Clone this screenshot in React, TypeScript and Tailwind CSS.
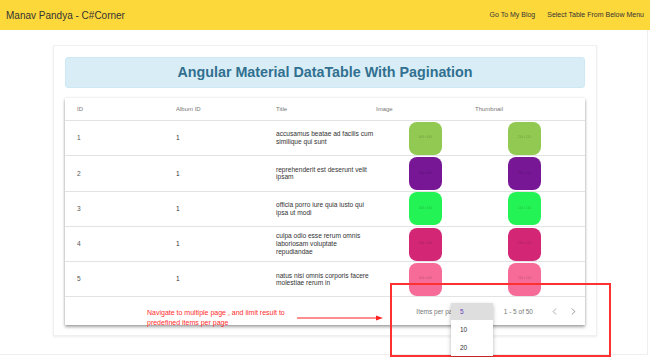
import { ChevronLeft, ChevronRight } from "lucide-react"

const rows = [
    { id: 1, album: 1, title: ["accusamus beatae ad facilis cum", "similique qui sunt"], color: "#92c952" },
    { id: 2, album: 1, title: ["reprehenderit est deserunt velit", "ipsam"], color: "#771796" },
    { id: 3, album: 1, title: ["officia porro iure quia iusto qui", "ipsa ut modi"], color: "#24f355" },
    { id: 4, album: 1, title: ["culpa odio esse rerum omnis", "laboriosam voluptate", "repudiandae"], color: "#d32776" },
    { id: 5, album: 1, title: ["natus nisi omnis corporis facere", "molestiae rerum in"], color: "#f66b97" },
]

function Photo({ color, label }: { color: string; label: string }) {
    return (
        <div
            className="w-[33px] h-[33px] rounded-[8px] flex items-center justify-center text-[3px] text-black/30"
            style={{ backgroundColor: color }}
        >
            {label}
        </div>
    )
}

export default function App() {
    return (
        <div className="relative w-[650px] h-[357px] overflow-hidden bg-white font-['Liberation_Sans',Arial,sans-serif]">
            <header className="h-[30px] bg-[#fdd83b] flex items-center justify-between pl-[6px] pr-[6px] text-[#333]">
                <span className="text-[10px]">Manav Pandya - C#Corner</span>
                <nav className="flex gap-[12px] text-[7px]">
                    <span>Go To My Blog</span>
                    <span>Select Table From Below Menu</span>
                </nav>
            </header>

            <div className="h-[325px] w-[648px] border-r border-b border-[#eee] pt-[15px]">
                <div className="mx-[53px] w-[544px] border border-[#f0f0f0] shadow-[0_1px_2px_rgba(0,0,0,0.08)] px-[11px] pt-[11px] pb-[10px]">
                    <div className="h-[31px] rounded-[3px] bg-[#d9edf7] border border-[#cfe9f4] flex items-center justify-center">
                        <h1 className="text-[14.3px] font-bold text-[#31708f]">Angular Material DataTable With Pagination</h1>
                    </div>

                    <div className="relative mt-[10px] bg-white shadow-[0_2px_3px_rgba(0,0,0,0.35),0_0_2px_rgba(0,0,0,0.12)]">
                        <div className="grid grid-cols-[99px_100px_100px_99px_99px] pl-[12px] h-[23px] items-center border-b border-[#e3e3e3] text-[6px] text-[#777]">
                            <span>ID</span>
                            <span>Album ID</span>
                            <span>Title</span>
                            <span>Image</span>
                            <span>Thumbnail</span>
                        </div>
                        {rows.map((r) => (
                            <div
                                key={r.id}
                                className="grid grid-cols-[99px_100px_100px_99px_99px] pl-[12px] h-[35.3px] items-center border-b border-[#e3e3e3] text-[6.6px] leading-[7.7px] text-[#333]"
                            >
                                <span className="text-[#555]">{r.id}</span>
                                <span>{r.album}</span>
                                <div className="whitespace-nowrap">
                                    {r.title.map((line) => (
                                        <div key={line}>{line}</div>
                                    ))}
                                </div>
                                <div className="flex justify-center">
                                    <Photo color={r.color} label="600 x 600" />
                                </div>
                                <div className="flex justify-center">
                                    <Photo color={r.color} label="150 x 150" />
                                </div>
                            </div>
                        ))}
                        <div className="relative h-[28px] flex items-center justify-end pr-[6px] text-[6.5px] text-[#777]">
                            <span className="mr-[44px]">Items per page</span>
                            <span className="mr-[16px]">1 - 5 of 50</span>
                            <ChevronLeft size={11} strokeWidth={1.5} className="text-[#888] mr-[8px]" />
                            <ChevronRight size={11} strokeWidth={1.5} className="text-[#666]" />

                            <div className="absolute left-[386px] top-[6px] w-[42px] bg-white shadow-[0_2px_4px_rgba(0,0,0,0.3)] text-[6.5px] text-[#333] z-10">
                                <div className="h-[17px] bg-[#dedede] flex items-center pl-[9px] text-[#673ab7]">5</div>
                                <div className="h-[18px] flex items-center pl-[9px]">10</div>
                                <div className="h-[18px] flex items-center pl-[9px]">20</div>
                            </div>
                        </div>
                    </div>
                </div>
            </div>

            <div className="absolute left-[147px] top-[308px] text-[7px] leading-[10px] text-[#ff2a2a]">
                <p>Navigate to multiple page , and limit result to</p>
                <p>predefined items per page</p>
            </div>
            <svg className="absolute left-[296px] top-[314px]" width="90" height="8" viewBox="0 0 90 8">
                <line x1="1" y1="4" x2="84" y2="4" stroke="#ff2020" strokeWidth="1.2" />
                <path d="M80 1.5 L87 4 L80 6.5 Z" fill="#ff2020" />
            </svg>
            <div className="absolute left-[390px] top-[283px] w-[221px] h-[74px] border-2 border-[#ff3030]" />
        </div>
    )
}
